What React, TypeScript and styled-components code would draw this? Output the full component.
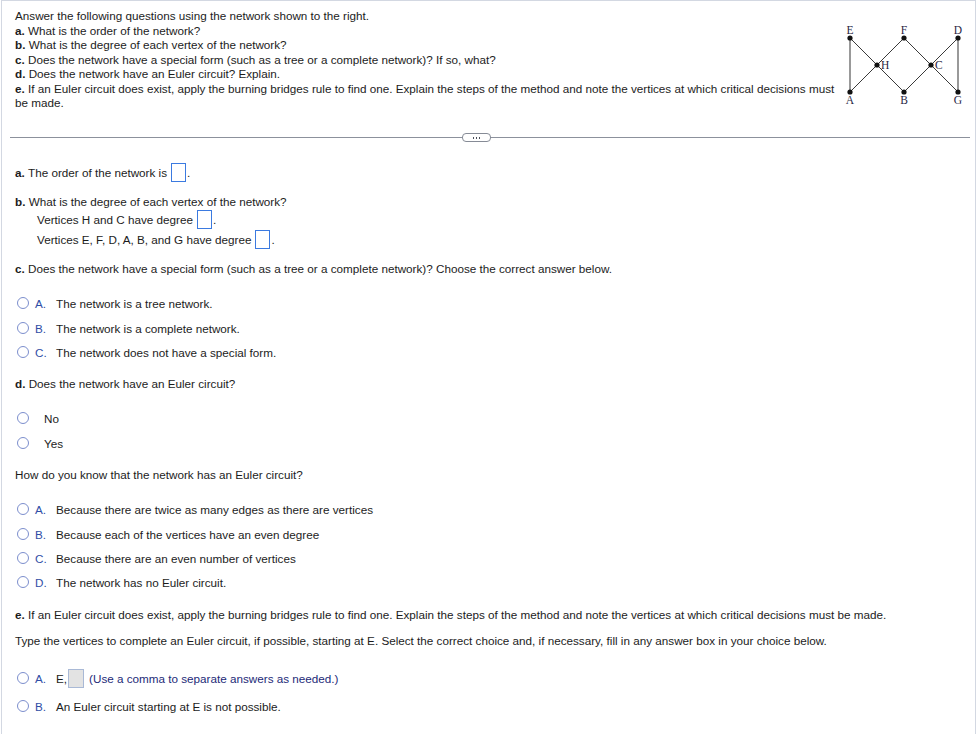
import styled, { createGlobalStyle } from "styled-components";

const GlobalStyle = createGlobalStyle`
  body {
    margin: 0;
    background: #fff;
    font-family: "Liberation Sans", Arial, sans-serif;
    font-size: 11.7px;
    color: #1c1c1c;
  }
`;

type Pt = [number, number];

const nodes: Record<string, Pt> = {
  E: [9, 37],
  F: [63, 37],
  D: [117, 37],
  H: [36, 64],
  C: [90, 64],
  A: [9, 91],
  B: [63, 91],
  G: [117, 91],
};

const edges: [string, string][] = [
  ["E", "H"],
  ["H", "B"],
  ["A", "H"],
  ["H", "F"],
  ["F", "C"],
  ["C", "B"],
  ["C", "G"],
  ["D", "C"],
];

const labels: { id: string; x: number; y: number; anchor: "middle" | "start" }[] = [
  { id: "E", x: 9, y: 33, anchor: "middle" },
  { id: "F", x: 63, y: 33, anchor: "middle" },
  { id: "D", x: 117, y: 33, anchor: "middle" },
  { id: "A", x: 9, y: 103, anchor: "middle" },
  { id: "B", x: 63, y: 103, anchor: "middle" },
  { id: "G", x: 117, y: 103, anchor: "middle" },
  { id: "H", x: 40, y: 68, anchor: "start" },
  { id: "C", x: 94, y: 68, anchor: "start" },
];

function Network() {
  return (
    <Graph width="130" height="110" viewBox="0 0 130 110">
      <line x1={9} y1={37} x2={9} y2={91} stroke="#6e6e6e" strokeWidth="1.4" />
      <line x1={117} y1={37} x2={117} y2={91} stroke="#6e6e6e" strokeWidth="1.4" />
      {edges.map(([a, b]) => (
        <line
          key={a + b}
          x1={nodes[a][0]}
          y1={nodes[a][1]}
          x2={nodes[b][0]}
          y2={nodes[b][1]}
          stroke="#3a3a3a"
          strokeWidth="1"
        />
      ))}
      {Object.entries(nodes).map(([id, [x, y]]) => (
        <circle key={id} cx={x} cy={y} r="2.6" fill="#111" />
      ))}
      {labels.map((l) => (
        <text
          key={l.id}
          x={l.x}
          y={l.y}
          textAnchor={l.anchor}
          fontFamily='"Liberation Serif", "Times New Roman", serif'
          fontSize="11.5"
          fill="#2a1f44"
        >
          {l.id}
        </text>
      ))}
    </Graph>
  );
}

export default function App() {
  return (
    <>
      <GlobalStyle />
      <Frame>
        <Header>
          <Intro>
            <div>Answer the following questions using the network shown to the right.</div>
            <div><b>a.</b> What is the order of the network?</div>
            <div><b>b.</b> What is the degree of each vertex of the network?</div>
            <div><b>c.</b> Does the network have a special form (such as a tree or a complete network)? If so, what?</div>
            <div><b>d.</b> Does the network have an Euler circuit? Explain.</div>
            <div>
              <b>e.</b> If an Euler circuit does exist, apply the burning bridges rule to find one. Explain the steps of the
              method and note the vertices at which critical decisions must be made.
            </div>
          </Intro>
          <Network />
        </Header>

        <Divider>
          <Pill>
            <Dot />
            <Dot />
            <Dot />
          </Pill>
        </Divider>

        <Body>
          <Row $mt={21}>
            <b>a.</b>&nbsp;The order of the network is<AnswerBox />.
          </Row>

          <Row $mt={11}>
            <b>b.</b>&nbsp;What is the degree of each vertex of the network?
          </Row>
          <Row $mt={0} $indent={22}>
            Vertices H and C have degree<AnswerBox />.
          </Row>
          <Row $mt={2} $indent={22}>
            Vertices E, F, D, A, B, and G have degree<AnswerBox />.
          </Row>

          <Row $mt={11}>
            <b>c.</b>&nbsp;Does the network have a special form (such as a tree or a complete network)? Choose the correct
            answer below.
          </Row>
          <Option $mt={17}>
            <Radio />
            <Letter>A.</Letter>The network is a tree network.
          </Option>
          <Option $mt={7}>
            <Radio />
            <Letter>B.</Letter>The network is a complete network.
          </Option>
          <Option $mt={6}>
            <Radio />
            <Letter>C.</Letter>The network does not have a special form.
          </Option>

          <Row $mt={13}>
            <b>d.</b>&nbsp;Does the network have an Euler circuit?
          </Row>
          <Option $mt={17}>
            <Radio />
            <Plain>No</Plain>
          </Option>
          <Option $mt={7}>
            <Radio />
            <Plain>Yes</Plain>
          </Option>

          <Row $mt={13}>How do you know that the network has an Euler circuit?</Row>
          <Option $mt={17}>
            <Radio />
            <Letter>A.</Letter>Because there are twice as many edges as there are vertices
          </Option>
          <Option $mt={7}>
            <Radio />
            <Letter>B.</Letter>Because each of the vertices have an even degree
          </Option>
          <Option $mt={6}>
            <Radio />
            <Letter>C.</Letter>Because there are an even number of vertices
          </Option>
          <Option $mt={6}>
            <Radio />
            <Letter>D.</Letter>The network has no Euler circuit.
          </Option>

          <Row $mt={14}>
            <b>e.</b>&nbsp;If an Euler circuit does exist, apply the burning bridges rule to find one. Explain the steps of
            the method and note the vertices at which critical decisions must be made.
          </Row>
          <Row $mt={8}>
            Type the vertices to complete an Euler circuit, if possible, starting at E. Select the correct choice and, if
            necessary, fill in any answer box in your choice below.
          </Row>
          <Option $mt={20}>
            <Radio />
            <Letter>A.</Letter>E,<GrayBox />
            <Hint>(Use a comma to separate answers as needed.)</Hint>
          </Option>
          <Option $mt={10}>
            <Radio />
            <Letter>B.</Letter>An Euler circuit starting at E is not possible.
          </Option>
        </Body>
      </Frame>
    </>
  );
}

const Frame = styled.div`
  box-sizing: border-box;
  width: 975px;
  min-height: 734px;
  margin-left: 1px;
  border: 1px solid #d3d8e2;
  border-bottom: none;
`;

const Header = styled.div`
  display: flex;
  justify-content: space-between;
  align-items: flex-start;
`;

const Intro = styled.div`
  width: 828px;
  padding: 8px 0 0 13px;
  line-height: 14.5px;

  b {
    font-weight: bold;
  }
`;

const Graph = styled.svg`
  flex: none;
  display: block;
  margin-right: 4px;
`;

const Divider = styled.div`
  position: relative;
  height: 9px;
  margin: 22px 5px 0 8px;

  &::before {
    content: "";
    position: absolute;
    left: 0;
    right: 0;
    top: 4px;
    height: 1px;
    background: #8c919c;
  }
`;

const Pill = styled.div`
  position: absolute;
  left: 452px;
  top: 0;
  box-sizing: border-box;
  width: 29px;
  height: 9px;
  border: 1px solid #868b96;
  border-radius: 4px;
  background: #fff;
  display: flex;
  align-items: center;
  justify-content: center;
  gap: 2px;
`;

const Dot = styled.span`
  width: 1px;
  height: 2px;
  background: #4a4f5a;
`;

const Body = styled.div`
  display: flex;
  flex-direction: column;
`;

const Row = styled.div<{ $mt: number; $indent?: number }>`
  display: flex;
  align-items: center;
  height: 18px;
  margin-top: ${(p) => p.$mt}px;
  padding-left: ${(p) => 13 + (p.$indent ?? 0)}px;
  white-space: nowrap;
`;

const Option = styled.label<{ $mt: number }>`
  display: flex;
  align-items: center;
  height: 18px;
  margin-top: ${(p) => p.$mt}px;
  padding-left: 15px;
  white-space: nowrap;
`;

const Radio = styled.span`
  flex: none;
  box-sizing: border-box;
  width: 12px;
  height: 12px;
  border: 1.5px solid #7c8ecd;
  border-radius: 50%;
  background: #fff;
`;

const Letter = styled.span`
  display: inline-block;
  width: 21px;
  margin-left: 6px;
  color: #2f4ea6;
`;

const Plain = styled.span`
  margin-left: 15px;
`;

const AnswerBox = styled.span`
  display: inline-block;
  box-sizing: border-box;
  width: 15px;
  height: 19px;
  margin: 0 1px 0 4px;
  border: 1px solid #3b7ae0;
  background: #fff;
`;

const GrayBox = styled.span`
  display: inline-block;
  box-sizing: border-box;
  width: 16px;
  height: 19px;
  margin-left: 1px;
  border: 1px solid #a9b9d6;
  background: #e3e3e3;
`;

const Hint = styled.span`
  margin-left: 5px;
  color: #232a78;
`;
